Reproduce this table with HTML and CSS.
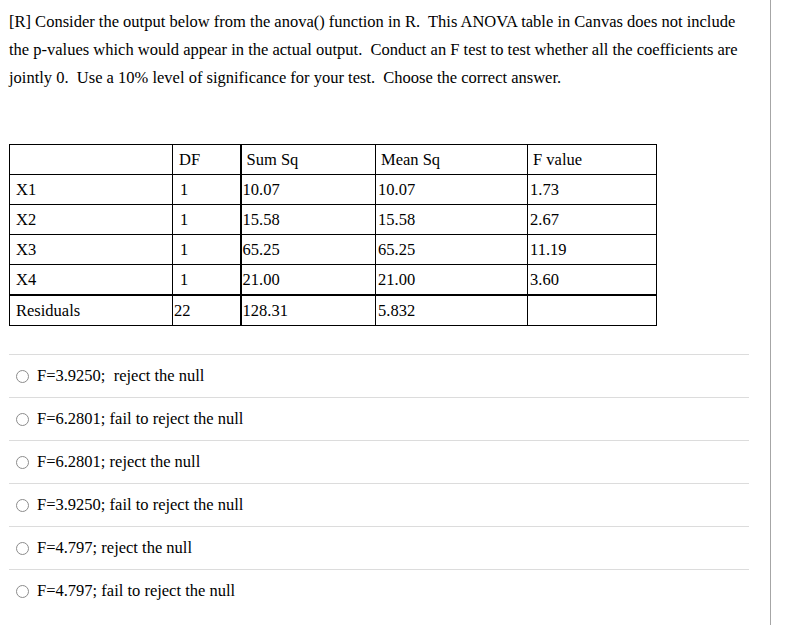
FILE: index.html
```html
<!DOCTYPE html>
<html>
<head>
<meta charset="utf-8">
<link rel="stylesheet" href="styles.css">
</head>
<body>
<div class="page">
  <p class="question">[R] Consider the output below from the anova() function in R.&nbsp; This ANOVA table in Canvas does not include the p-values which would appear in the actual output.&nbsp; Conduct an F test to test whether all the coefficients are jointly 0.&nbsp; Use a 10% level of significance for your test.&nbsp; Choose the correct answer.</p>

  <table class="anova">
    <colgroup>
      <col class="c1"><col class="c2"><col class="c3"><col class="c4"><col class="c5">
    </colgroup>
    <tr class="head">
      <td class="name"></td>
      <td class="df">DF</td>
      <td class="ss">Sum Sq</td>
      <td>Mean Sq</td>
      <td>F value</td>
    </tr>
    <tr>
      <td class="name">X1</td><td class="df">1</td><td class="ss">10.07</td><td>10.07</td><td>1.73</td>
    </tr>
    <tr>
      <td class="name">X2</td><td class="df">1</td><td class="ss">15.58</td><td>15.58</td><td>2.67</td>
    </tr>
    <tr>
      <td class="name">X3</td><td class="df">1</td><td class="ss">65.25</td><td>65.25</td><td>11.19</td>
    </tr>
    <tr>
      <td class="name">X4</td><td class="df">1</td><td class="ss">21.00</td><td>21.00</td><td>3.60</td>
    </tr>
    <tr class="resid">
      <td class="name">Residuals</td><td class="df tight">22</td><td class="ss">128.31</td><td>5.832</td><td></td>
    </tr>
  </table>

  <ul class="answers">
    <li class="answer"><span class="radio"></span><span class="label">F=3.9250;&nbsp; reject the null</span></li>
    <li class="answer"><span class="radio"></span><span class="label">F=6.2801; fail to reject the null</span></li>
    <li class="answer"><span class="radio"></span><span class="label">F=6.2801; reject the null</span></li>
    <li class="answer"><span class="radio"></span><span class="label">F=3.9250; fail to reject the null</span></li>
    <li class="answer"><span class="radio"></span><span class="label">F=4.797; reject the null</span></li>
    <li class="answer"><span class="radio"></span><span class="label">F=4.797; fail to reject the null</span></li>
  </ul>
</div>
</body>
</html>
```

FILE: styles.css
```css
html, body {
  margin: 0;
  padding: 0;
  background: #fff;
}

body {
  font-family: "Liberation Serif", "Times New Roman", serif;
  font-size: 16.5px;
  color: #000;
}

.page {
  box-sizing: border-box;
  width: 771px;
  height: 625px;
  padding: 8px 21px 0 9px;
  border-right: 1px solid #a6a6a6;
  overflow: hidden;
}

.question {
  margin: 0;
  line-height: 28px;
}

.anova {
  margin-top: 52px;
  border-collapse: collapse;
  width: 647px;
  table-layout: fixed;
  line-height: 18px;
}

.anova .c1 { width: 163px; }
.anova .c2 { width: 68px; }
.anova .c3 { width: 135px; }
.anova .c4 { width: 152px; }
.anova .c5 { width: 129px; }

.anova td {
  border: 1px solid #000;
  height: 29px;
  padding: 0 0 0 2px;
  vertical-align: middle;
}

.anova td.name { padding-left: 6px; }
.anova td.df { padding-left: 7px; }
.anova td.df.tight { padding-left: 1px; }
.anova td.ss { border-left: 2px solid #000; padding-left: 1px; }

.anova .head td { padding-left: 5px; }
.anova .head td.df { padding-left: 6px; }
.anova .head td.ss { padding-left: 5px; }

.anova .resid td { border-top: 2px solid #000; }

.answers {
  list-style: none;
  margin: 28px 0 0 0;
  padding: 0;
}

.answer {
  display: flex;
  align-items: center;
  height: 42px;
  border-top: 1px solid #dcdcdc;
  padding-left: 7px;
}

.radio {
  box-sizing: border-box;
  width: 13px;
  height: 13px;
  border: 1px solid #8c8c8c;
  border-radius: 50%;
  margin-right: 8px;
  flex: none;
}

.label {
  line-height: 20px;
}
```
